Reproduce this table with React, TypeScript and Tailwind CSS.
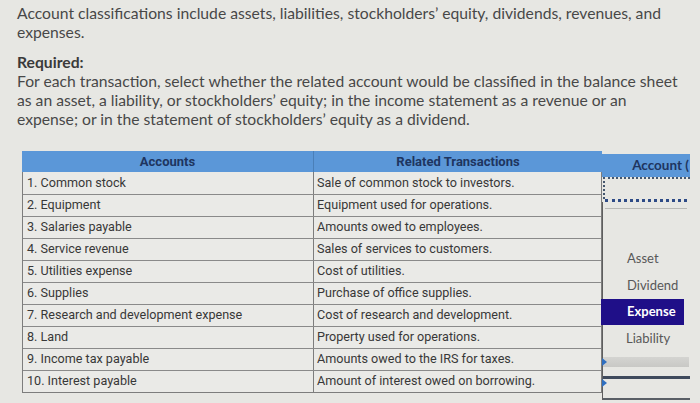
import React from "react";

const accounts = [
  "1. Common stock",
  "2. Equipment",
  "3. Salaries payable",
  "4. Service revenue",
  "5. Utilities expense",
  "6. Supplies",
  "7. Research and development expense",
  "8. Land",
  "9. Income tax payable",
  "10. Interest payable",
];

const transactions = [
  "Sale of common stock to investors.",
  "Equipment used for operations.",
  "Amounts owed to employees.",
  "Sales of services to customers.",
  "Cost of utilities.",
  "Purchase of office supplies.",
  "Cost of research and development.",
  "Property used for operations.",
  "Amounts owed to the IRS for taxes.",
  "Amount of interest owed on borrowing.",
];

export default function App() {
  return (
    <div className="w-[700px] h-[403px] overflow-hidden bg-[#e7e7e3] relative">
      <div
        className="pl-[17px] pt-[4px] text-[15.7px] leading-[19px] text-[#484848]"
        style={{ fontFamily: "Lato, 'Open Sans', sans-serif" }}
      >
        <p>
          Account classifications include assets, liabilities, stockholders’ equity, dividends, revenues, and
          <br />
          expenses.
        </p>
        <p className="mt-[11px] font-bold text-[#3a3a3a]">Required:</p>
        <p>
          For each transaction, select whether the related account would be classified in the balance sheet
          <br />
          as an asset, a liability, or stockholders’ equity; in the income statement as a revenue or an
          <br />
          expense; or in the statement of stockholders’ equity as a dividend.
        </p>
      </div>

      <div className="mt-[22px] ml-[22px] flex">
        {/* Table */}
        <div
          className="w-[580px] text-[12.6px] text-[#383838]"
          style={{ fontFamily: "Roboto, 'Liberation Sans', Arial, sans-serif" }}
        >
          <div className="flex h-[21px] bg-[#5b97d8] text-[#1e3560] font-bold text-[13px]">
            <div className="w-[291px] flex items-center justify-center">Accounts</div>
            <div className="w-[289px] flex items-center justify-center border-l border-[#4a7fb8]">
              Related Transactions
            </div>
          </div>
          <div className="border-l border-b border-r border-[#7d7d7d]">
            {accounts.map((a, i) => (
              <div key={i} className={`flex h-[22px] ${i > 0 ? "border-t border-[#8a8a8a]" : ""}`}>
                <div className="w-[290px] flex items-center pl-[4px] bg-[#eaeae7]">{a}</div>
                <div className="flex-1 flex items-center pl-[3px] border-l border-[#7d7d7d] bg-[#eaeae7]">
                  {transactions[i]}
                </div>
              </div>
            ))}
          </div>
        </div>

        {/* Third column */}
        <div
          className="w-[88px] flex flex-col"
          style={{ fontFamily: "Lato, 'Open Sans', sans-serif" }}
        >
          <div className="h-[23px] mt-[3px] bg-[#5b97d8] text-[#1e3560] font-bold text-[13.5px] flex items-center justify-end pr-[1px] whitespace-nowrap overflow-hidden">
            Account (
          </div>
          <div className="h-[22px] ml-[1px] border-t-2 border-l-2 border-dotted border-[#44566e]" />
          <div className="h-[2px] ml-[3px] mr-[3px] border-b-[3px] border-dotted border-[#2d4a86]" />
          <div className="flex-1 border-l border-[#5e5e5e] flex flex-col">
            <div className="mt-[6px] ml-[2px] mr-[3px] h-px bg-[#b9b9b6]" />
            <div className="mt-[36px] text-[13px] text-[#585858] flex flex-col">
              <div className="h-[27px] flex items-center pl-[24px]">Asset</div>
              <div className="h-[27px] flex items-center pl-[24px]">Dividend</div>
              <div className="h-[26px] -ml-[2px] mr-[6px] flex items-center pl-[26px] bg-[#1f0f88] text-white font-bold">
                Expense
              </div>
              <div className="h-[27px] flex items-center pl-[23px]">Liability</div>
            </div>
            <div className="relative mt-[5px] h-[10px] bg-gradient-to-b from-[#d4d4d1] to-[#c8c8c5] mr-[1px]">
              <div className="absolute -left-px top-[1px] w-0 h-0 border-t-[4px] border-b-[4px] border-l-[5px] border-t-transparent border-b-transparent border-l-[#2f6fc0]" />
            </div>
            <div className="relative mt-[9px] h-[3px] bg-[#3f4a5c]">
              <div className="absolute -left-px top-[3px] w-0 h-0 border-t-[4px] border-b-[4px] border-l-[5px] border-t-transparent border-b-transparent border-l-[#2f6fc0]" />
            </div>
            <div className="mt-[19px] h-[2px] bg-[#5a5f66]" />
          </div>
        </div>
      </div>
    </div>
  );
}
